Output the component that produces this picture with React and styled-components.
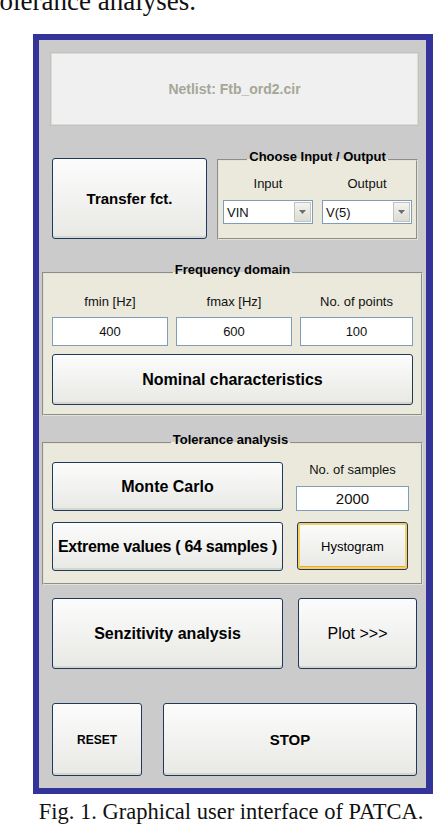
import React from 'react'
import styled, { createGlobalStyle } from 'styled-components';

const GlobalStyle = createGlobalStyle`
    html, body {
        margin: 0;
        padding: 0;
        background: #ffffff;
    }
    body {
        width: 434px;
        height: 838px;
        overflow: hidden;
    }
`;

const Page = styled.div`
    width: 434px;
    height: 838px;
    overflow: hidden;
    font-family: "Liberation Sans", Arial, sans-serif;
`;

const PaperText = styled.div`
    font-family: "Liberation Serif", "Times New Roman", serif;
    font-size: ${props => props.size || 22}px;
    line-height: ${props => props.size ? props.size + 4 : 26}px;
    color: #111;
    white-space: nowrap;
`;

const TopText = styled(PaperText)`
    margin: -14px 0 0 -8px;
    height: 31px;
`;

const Caption = styled(PaperText)`
    width: 400px;
    margin: 5px 0 0 31px;
    text-align: center;
`;

const Window = styled.div`
    box-sizing: border-box;
    width: 400px;
    margin: 17px 0 0 33px;
    border: 6px solid #333399;
    border-right-width: 7px;
    background: #cbcbcb;
    padding: 0 3px 12px 3px;
    display: flex;
    flex-direction: column;
`;

const Row = styled.div`
    display: grid;
    grid-template-columns: ${props => props.cols};
    column-gap: ${props => props.gap}px;
    margin: ${props => props.top || 0}px 6px 0 10px;
    align-items: start;
`;

const NetlistBox = styled.div`
    height: 72px;
    margin: 13px 5px 0 9px;
    box-sizing: border-box;
    border: 1px solid #dcdcd0;
    box-shadow: 0 0 0 1px #c2c2c2;
    background: #f0f0f0;
    display: flex;
    align-items: center;
    justify-content: center;
    color: #a6a698;
    font-weight: bold;
    font-size: 14px;
`;

const Button = styled.button`
    box-sizing: border-box;
    height: ${props => props.h}px;
    margin: ${props => props.m || 0};
    padding: 0;
    border: 1px solid #1e3a5c;
    border-radius: 3px;
    background: linear-gradient(#fcfcfc, #f0f0ee 60%, #e8e8e4);
    box-shadow: ${props => props.focus
        ? 'inset 0 0 0 2px #f6cf5e, inset 0 -3px 0 #e8a83a'
        : 'inset 0 -2px 0 #d6d6d0'};
    font-family: "Liberation Sans", Arial, sans-serif;
    font-size: ${props => props.size || 16}px;
    font-weight: ${props => props.light ? 'normal' : 'bold'};
    color: #000;
    white-space: nowrap;
    letter-spacing: ${props => props.tight ? '-0.3px' : '0'};
    cursor: pointer;
`;

const Group = styled.fieldset`
    margin: ${props => props.top || 0}px 0 0 0;
    padding: ${props => props.pad};
    border: 2px groove #e2e2d8;
    background: #eae9dc;
    min-width: 0;
`;

const Legend = styled.legend`
    margin: 0 auto;
    padding: 0 2px 6px;
    font-size: 13px;
    line-height: 14px;
    font-weight: bold;
    color: #000;
`;

const Label = styled.div`
    font-size: 13px;
    line-height: 16px;
    text-align: center;
    color: #111;
`;

const Grid = styled.div`
    display: grid;
    grid-template-columns: ${props => props.cols};
    column-gap: ${props => props.gap}px;
    row-gap: ${props => props.rowGap || 0}px;
    margin-top: ${props => props.top || 0}px;
`;

const Field = styled.div`
    box-sizing: border-box;
    height: ${props => props.h}px;
    border: 1px solid #7f9db9;
    background: #fff;
    display: flex;
    align-items: center;
    justify-content: center;
    font-size: ${props => props.size || 13}px;
    color: #111;
`;

const Select = styled.div`
    box-sizing: border-box;
    height: 24px;
    border: 1px solid #7f9db9;
    background: #fff;
    display: flex;
    align-items: center;
    padding: 1px;
    font-size: 13px;
    color: #111;
`;

const SelectText = styled.span`
    flex: 1;
    padding-left: 2px;
`;

const Arrow = styled.span`
    width: 17px;
    height: 20px;
    box-sizing: border-box;
    border: 1px solid #c4c4bc;
    background: linear-gradient(#f4f4f0, #dcdcd4);
    display: flex;
    align-items: center;
    justify-content: center;
`;

const SampleCell = styled.div`
    height: 49px;
    display: flex;
    flex-direction: column;
    justify-content: space-between;
`;

const DropArrow = () => (
    <Arrow>
        <svg width="7" height="4" viewBox="0 0 7 4">
            <path d="M0 0 H7 L3.5 4 Z" fill="#6d6d6d" />
        </svg>
    </Arrow>
);

export default function App() {
    return (
        <Page>
            <GlobalStyle />
            <TopText size={27}>tolerance analyses.</TopText>
            <Window>
                <NetlistBox>Netlist: Ftb_ord2.cir</NetlistBox>

                <Row cols="155px 201px" gap={10} top={25}>
                    <Button h={81} m="8px 0 0 0" size={15}>Transfer fct.</Button>
                    <Group pad="6px 4px 14px">
                        <Legend>Choose Input / Output</Legend>
                        <Grid cols="90px 90px" gap={9}>
                            <Label>Input</Label>
                            <Label>Output</Label>
                        </Grid>
                        <Grid cols="90px 90px" gap={9} top={8}>
                            <Select><SelectText>VIN</SelectText><DropArrow /></Select>
                            <Select><SelectText>V(5)</SelectText><DropArrow /></Select>
                        </Grid>
                    </Group>
                </Row>

                <Group top={23} pad="11px 8px 9px">
                    <Legend>Frequency domain</Legend>
                    <Grid cols="116px 116px 1fr" gap={8} rowGap={7}>
                        <Label>fmin [Hz]</Label>
                        <Label>fmax [Hz]</Label>
                        <Label>No. of points</Label>
                        <Field h={29}>400</Field>
                        <Field h={29}>600</Field>
                        <Field h={29}>100</Field>
                    </Grid>
                    <Button h={51} m="8px 0 0 0" style={{ width: '100%' }}>Nominal characteristics</Button>
                </Group>

                <Group top={17} pad="9px 12px 12px 8px">
                    <Legend>Tolerance analysis</Legend>
                    <Grid cols="231px 113px" gap={13} rowGap={11}>
                        <Button h={49}>Monte Carlo</Button>
                        <SampleCell>
                            <Label>No. of samples</Label>
                            <Field h={25} size={15}>2000</Field>
                        </SampleCell>
                        <Button h={49} tight>Extreme values ( 64 samples )</Button>
                        <Button h={48} m="0 1px" size={13} light focus>Hystogram</Button>
                    </Grid>
                </Group>

                <Row cols="231px 1fr" gap={15} top={13}>
                    <Button h={71}>Senzitivity analysis</Button>
                    <Button h={71} light>Plot &gt;&gt;&gt;</Button>
                </Row>

                <Row cols="90px 1fr" gap={21} top={34}>
                    <Button h={73} size={12}>RESET</Button>
                    <Button h={73} size={15}>STOP</Button>
                </Row>
            </Window>
            <Caption size={22.5}>Fig. 1. Graphical user interface of PATCA.</Caption>
        </Page>
    )
}
